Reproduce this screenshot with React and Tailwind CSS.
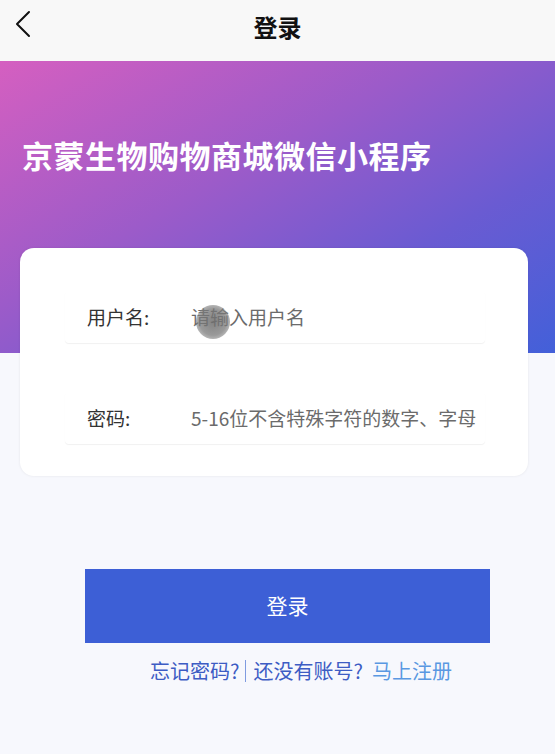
export default function App() {
  return (
    <div className="relative w-[555px] h-[754px] overflow-hidden bg-[#f7f8fd]" style={{ fontFamily: '"Noto Sans CJK SC", "Noto Sans", sans-serif' }}>
      <div className="h-[61px] bg-[#f8f8f8] flex items-center justify-center relative">
        <svg className="absolute left-[12px] top-[10px]" width="22" height="28" viewBox="0 0 22 28" fill="none">
          <path d="M17 2 L5 14 L17 26" stroke="#111" strokeWidth="2" strokeLinecap="round" strokeLinejoin="round" />
        </svg>
        <span className="text-[24px] font-bold text-[#111] leading-none -mt-[8px]">登录</span>
      </div>
      <div className="h-[292px] bg-[linear-gradient(150deg,#d55fc0_0%,#9c5bc9_40%,#6a5bd2_70%,#4360d9_100%)] pt-[74px] pl-[22px]">
        <h1 className="text-[31px] font-bold text-white leading-[40px] tracking-[0.5px]">京蒙生物购物商城微信小程序</h1>
      </div>
      <div className="absolute left-[20px] top-[248px] w-[508px] h-[228px] bg-white rounded-[14px] shadow-[0_0_3px_rgba(0,0,0,0.08)] pt-[43px] pl-[45px] pr-[43px] flex flex-col gap-[49px]">
        <div className="h-[52px] flex items-center pl-[22px] shadow-[0_1px_1px_rgba(0,0,0,0.06)] rounded-[4px]">
          <span className="w-[104px] text-[19px] text-[#333]">用户名:</span>
          <span className="text-[19px] text-[#6b6b6b] whitespace-nowrap">请输入用户名</span>
        </div>
        <div className="h-[52px] flex items-center pl-[22px] shadow-[0_1px_1px_rgba(0,0,0,0.06)] rounded-[4px] overflow-hidden">
          <span className="w-[104px] shrink-0 text-[19px] text-[#333]">密码:</span>
          <span className="text-[19px] text-[#6b6b6b] whitespace-nowrap">5-16位不含特殊字符的数字、字母</span>
        </div>
      </div>
      <div className="mt-[216px] ml-[85px] w-[405px] h-[74px] bg-[#3d5fd6] flex items-center justify-center">
        <span className="text-[21px] text-white">登录</span>
      </div>
      <div className="mt-[15px] pl-[150px] flex items-center text-[20px] leading-[26px] whitespace-nowrap">
        <span className="text-[#3d5cc4]">忘记密码?</span>
        <span className="ml-[6px] mr-[7px] w-[1px] h-[22px] bg-[#7f9be0]"></span>
        <span className="text-[#3d5cc4]">还没有账号?</span>
        <span className="ml-[9px] text-[#5a98e2]">马上注册</span>
      </div>
      <div className="absolute left-[196px] top-[305px] w-[34px] h-[34px] rounded-full bg-[radial-gradient(circle,rgba(110,110,110,0.85)_0%,rgba(120,120,120,0.75)_55%,rgba(160,160,160,0.25)_100%)]"></div>
    </div>
  );
}
